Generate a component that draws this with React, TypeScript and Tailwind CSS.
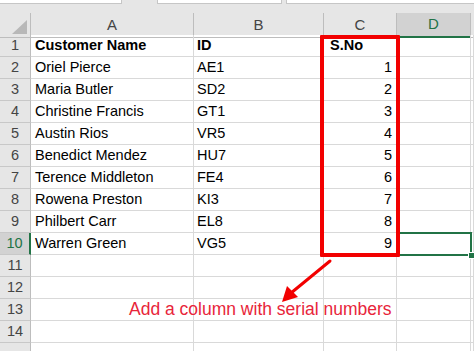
import React from 'react';

const rows: [string, string, string][] = [
  ['Customer Name', 'ID', 'S.No'],
  ['Oriel Pierce', 'AE1', '1'],
  ['Maria Butler', 'SD2', '2'],
  ['Christine Francis', 'GT1', '3'],
  ['Austin Rios', 'VR5', '4'],
  ['Benedict Mendez', 'HU7', '5'],
  ['Terence Middleton', 'FE4', '6'],
  ['Rowena Preston', 'KI3', '7'],
  ['Philbert Carr', 'EL8', '8'],
  ['Warren Green', 'VG5', '9'],
  ['', '', ''],
  ['', '', ''],
  ['', '', ''],
  ['', '', ''],
  ['', '', ''],
];

const gridCols = 'grid grid-cols-[31px_163px_130px_73px_74px_3px]';
const cell = 'h-[22px] border-r border-b border-[#d9d9d9] flex items-center overflow-visible whitespace-nowrap';

export default function App() {
  return (
    <div className="relative w-[474px] h-[351px] overflow-hidden bg-white text-black" style={{ fontFamily: '"Liberation Sans", Arial, sans-serif' }}>
      {/* formula bar remains */}
      <div className="h-[13px] bg-[#e6e6e6]">
        <div className="flex h-[4px]">
          <div className="w-[122px] bg-white border-r border-b border-[#c6c6c6]" />
          <div className="w-[35px]" />
          <div className="w-[125px] bg-white border-l border-r border-b border-[#c6c6c6]" />
          <div className="w-[4px]" />
          <div className="flex-1 bg-white border-l border-b border-[#c6c6c6]" />
        </div>
      </div>

      {/* column headers */}
      <div className={`${gridCols} h-[22px] bg-[#e6e6e6] text-[#444] text-[15px]`}>
        <div className="relative border-r border-b border-[#bdbdbd]">
          <svg className="absolute right-[3px] bottom-[3px]" width="15" height="14" viewBox="0 0 15 14">
            <polygon points="15,0 15,14 0,14" fill="#b8b8b8" />
          </svg>
        </div>
        <div className="flex items-center justify-center border-r border-b border-[#bdbdbd]">A</div>
        <div className="flex items-center justify-center border-r border-b border-[#bdbdbd]">B</div>
        <div className="flex items-center justify-center border-r border-b border-[#bdbdbd]">C</div>
        <div className="flex items-center justify-center border-r border-b-2 border-r-[#bdbdbd] border-b-[#217346] bg-[#d2d2d2] text-[#217346]">D</div>
        <div className="border-b border-[#bdbdbd]" />
      </div>

      {/* rows */}
      {rows.map((r, i) => {
        const n = i + 1;
        const sel = n === 10;
        return (
          <div key={n} className={`${gridCols} text-[14.5px]`}>
            <div
              className={`h-[22px] flex items-center justify-center border-b border-[#c8c8c8] ${
                sel ? 'bg-[#d2d2d2] text-[#217346] border-r-2 border-r-[#217346]' : 'bg-[#e6e6e6] text-[#444] border-r border-r-[#bdbdbd]'
              }`}
            >
              {n < 15 ? n : ''}
            </div>
            <div className={`${cell} pl-[4px] ${n === 1 ? 'font-bold' : ''}`}>
              {n === 13 ? (
                <span className="pl-[94px] text-[17.5px] text-[#e8253a]">Add a column with serial numbers</span>
              ) : (
                r[0]
              )}
            </div>
            <div className={`${cell} pl-[3px] ${n === 1 ? 'font-bold' : ''}`}>{r[1]}</div>
            <div className={`${cell} ${n === 1 ? 'pl-[6px] font-bold' : 'justify-end pr-[4px]'}`}>{r[2]}</div>
            <div className={cell} />
            <div className={cell} />
          </div>
        );
      })}

      {/* active cell D10 */}
      <div className="absolute left-[396px] top-[232px] w-[76px] h-[24px] border-2 border-[#217346]">
        <span className="absolute right-[-5px] bottom-[-5px] w-[7px] h-[7px] bg-[#217346] border border-white" />
      </div>

      {/* highlight box around column C */}
      <div className="absolute left-[320px] top-[35px] w-[80px] h-[222px] border-4 border-[#f20000] rounded-[1px]" />

      {/* arrow */}
      <svg className="absolute left-0 top-0 pointer-events-none" width="474" height="351" viewBox="0 0 474 351">
        <line x1="330" y1="261" x2="291" y2="293" stroke="#f20000" strokeWidth="3" strokeLinecap="round" />
        <polygon points="282,302 287,286 298,297" fill="#f20000" />
      </svg>
    </div>
  );
}
